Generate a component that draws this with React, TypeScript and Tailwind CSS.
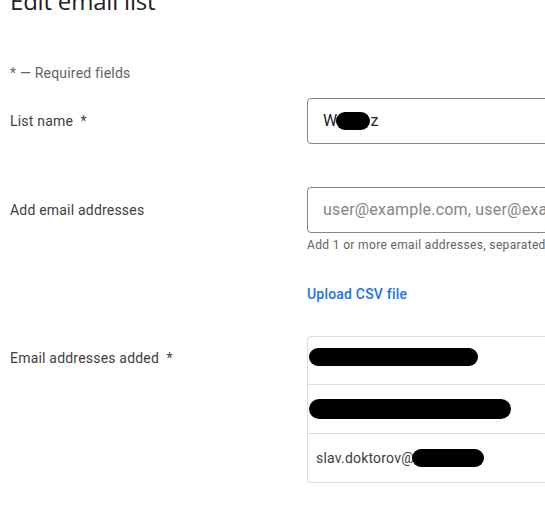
import React from 'react'

function Redact({ w, h = 18, className = '' }: { w: number; h?: number; className?: string }) {
    return (
        <span
            className={`inline-block bg-black rounded-full align-middle ${className}`}
            style={{ width: w, height: h }}
        />
    )
}

export default function App() {
    return (
        <div className="w-[545px] h-[505px] overflow-hidden bg-white font-['Roboto',sans-serif] text-[#3c4043] tracking-[0.2px]">
            <div className="pl-[10px]">
                {/* Header */}
                <h1 className="text-[24px] leading-[32px] mt-[-15px] text-[#202124] font-['Open_Sans',sans-serif] tracking-[-0.2px]">
                    Edit email list
                </h1>

                <p className="mt-[46px] text-[14px] leading-[20px] text-[#5f6368]">* — Required fields</p>

                {/* List name */}
                <div className="mt-[15px] flex">
                    <div className="w-[297px] shrink-0 flex items-center text-[14px]">List name&nbsp; *</div>
                    <div className="w-[420px] shrink-0 h-[46px] border border-[#80868b] rounded-[4px] flex items-center pl-[15px] text-[16px] text-[#202124]">
                        W<Redact w={34} className="-ml-[1px]" />z
                    </div>
                </div>

                {/* Add email addresses */}
                <div className="mt-[43px] flex">
                    <div className="w-[297px] shrink-0 pt-[13px] text-[14px] leading-[20px]">Add email addresses</div>
                    <div className="w-[420px] shrink-0">
                        <div className="h-[46px] border border-[#80868b] rounded-[4px] flex items-center pl-[15px] text-[16px] text-[#80868b] whitespace-nowrap">
                            user@example.com, user@example.com
                        </div>
                        <p className="mt-[4px] text-[12px] leading-[16px] text-[#5f6368] whitespace-nowrap tracking-[0.35px]">
                            Add 1 or more email addresses, separated by commas
                        </p>
                        <button className="mt-[31px] text-[14px] leading-[20px] font-medium text-[#1a73e8]">
                            Upload CSV file
                        </button>
                    </div>
                </div>

                {/* Email addresses added */}
                <div className="mt-[30px] flex">
                    <div className="w-[297px] shrink-0 pt-[12px] text-[14px] leading-[20px]">Email addresses added&nbsp; *</div>
                    <div className="w-[420px] shrink-0 border border-[#dadce0] rounded-[4px] text-[14px] text-[#3c4043]">
                        <div className="h-[48px] flex items-center pl-[1px] pb-[8px] border-b border-[#dadce0]">
                            <Redact w={169} />
                        </div>
                        <div className="h-[49px] flex items-center pl-[1px] border-b border-[#dadce0]">
                            <Redact w={202} h={20} />
                        </div>
                        <div className="h-[48px] flex items-center pl-[8px]">
                            slav.doktorov@<Redact w={72} className="-ml-[2px]" />
                        </div>
                    </div>
                </div>
            </div>
        </div>
    )
}
